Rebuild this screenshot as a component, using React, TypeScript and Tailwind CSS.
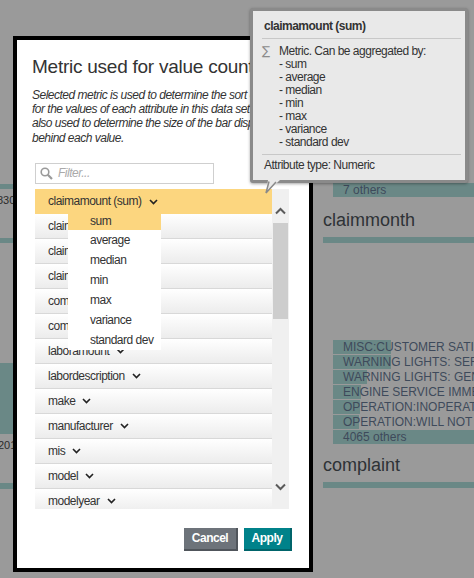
import React from "react";

const rows = [
  "claimdate",
  "claimmonth",
  "claimnumber",
  "complaint",
  "component",
  "laboramount",
  "labordescription",
  "make",
  "manufacturer",
  "mis",
  "model",
  "modelyear",
];

const metrics = ["sum", "average", "median", "min", "max", "variance", "standard dev"];

const complaints = [
  { label: "MISC:CUSTOMER SATISFACTION", w: 58 },
  { label: "WARNING LIGHTS: SERVICE", w: 58 },
  { label: "WARNING LIGHTS: GENERAL", w: 34 },
  { label: "ENGINE SERVICE IMMEDIATELY", w: 28 },
  { label: "OPERATION:INOPERATIVE", w: 27 },
  { label: "OPERATION:WILL NOT START", w: 26 },
];

function Chevron() {
  return (
    <svg width="9" height="6" viewBox="0 0 9 6" className="mt-[1px] shrink-0">
      <path d="M1 1l3.5 3.6L8 1" fill="none" stroke="#222" strokeWidth="1.6" />
    </svg>
  );
}

function ScrollArrow({ up }: { up?: boolean }) {
  return (
    <svg width="11" height="8" viewBox="0 0 11 8" className="mx-auto">
      <path
        d={up ? "M1 6.5l4.5-4.5 4.5 4.5" : "M1 1.5l4.5 4.5 4.5-4.5"}
        fill="none"
        stroke="#5a5a5a"
        strokeWidth="2"
      />
    </svg>
  );
}

function Background() {
  return (
    <div className="flex h-full">
      <div className="w-[13px] shrink-0 overflow-hidden pt-[184px] text-[11px] leading-[14px] text-[#2b2b2b]">
        <div className="h-[5px] bg-[#6a8886]" />
        <div className="mt-[4px] ml-[-3px] whitespace-nowrap">830</div>
        <div className="mt-[31px] h-[5px] bg-[#6a8886]" />
        <div className="mt-[120px] h-[71px] bg-[#6a8886]" />
        <div className="mt-[4px] ml-[-2px] whitespace-nowrap">2013</div>
        <div className="mt-[31px] h-[6px] bg-[#6a8886]" />
      </div>
      <div className="w-[300px] shrink-0" />
      <div className="flex-1 overflow-hidden pt-[183px] pl-[10px] text-[#3e4a5b]">
        <div className="ml-[10px] h-[14px] bg-[#6a8886] pl-[10px] text-[12px] leading-[14px] whitespace-nowrap">
          7 others
        </div>
        <div className="mt-[13px] text-[18px] leading-[21px] text-[#2e3236]">claimmonth</div>
        <div className="mt-[6px] h-[6px] bg-[#6a8886]" />
        <div className="mt-[97px] ml-[10px] flex flex-col gap-[1px] text-[12px] leading-[14px]">
          {complaints.map((c) => (
            <div key={c.label} className="relative h-[14px] whitespace-nowrap">
              <div className="absolute inset-y-0 left-0 bg-[#6a8886]" style={{ width: c.w }} />
              <span className="relative pl-[10px]">{c.label}</span>
            </div>
          ))}
          <div className="h-[14px] bg-[#6a8886] pl-[10px] whitespace-nowrap">4065 others</div>
        </div>
        <div className="mt-[11px] text-[18px] leading-[21px] text-[#2e3236]">complaint</div>
        <div className="mt-[6px] h-[6px] bg-[#6a8886]" />
      </div>
    </div>
  );
}

function MetricDialog() {
  return (
    <div className="absolute left-[13px] top-[36px] flex h-[536px] w-[300px] flex-col border-4 border-black bg-white text-[#333]">
      <div className="pl-[15px] pt-[16px] text-[19px] leading-[22px] tracking-[-0.25px] whitespace-nowrap">
        Metric used for value counts
      </div>
      <p className="mt-[10px] pl-[15px] text-[12px] italic leading-[14.2px] tracking-[-0.5px] whitespace-nowrap">
        Selected metric is used to determine the sort order
        <br />
        for the values of each attribute in this data set. It is
        <br />
        also used to determine the size of the bar displayed
        <br />
        behind each value.
      </p>

      <div className="mt-[18px] ml-[18px] flex h-[21px] w-[179px] items-center gap-[5px] border border-[#cfcfcf] pl-[4px]">
        <svg width="13" height="13" viewBox="0 0 13 13">
          <circle cx="5" cy="5" r="3.8" fill="none" stroke="#9a9a9a" strokeWidth="1.6" />
          <path d="M7.8 7.8l4.2 4.2" stroke="#9a9a9a" strokeWidth="2.2" />
        </svg>
        <span className="text-[12px] italic tracking-[-0.5px] text-[#aaa]">Filter...</span>
      </div>

      <div className="relative mt-[5px] ml-[18px] flex h-[320px] w-[254px]">
        <div className="flex-1 overflow-hidden">
          <div className="flex h-[25px] items-center gap-[7px] bg-[#fcd67f] pl-[13px] text-[12px] tracking-[-0.5px]">
            <span>claimamount (sum)</span>
            <Chevron />
          </div>
          {rows.map((r) => (
            <div
              key={r}
              className="flex h-[25px] items-center gap-[7px] border-b border-[#d8d8d8] bg-linear-to-b from-white to-[#ececec] pl-[13px] text-[12px] tracking-[-0.5px]"
            >
              <span>{r}</span>
              <Chevron />
            </div>
          ))}
        </div>
        <div className="flex w-[17px] flex-col bg-[#f0f0f0] pt-[18px] pb-[18px]">
          <ScrollArrow up />
          <div className="mx-auto mt-[8px] h-[96px] w-[15px] bg-[#cdcdcd]" />
          <div className="flex-1" />
          <ScrollArrow />
        </div>

        <div className="absolute left-[33px] top-[24px] z-10 w-[93px] bg-white text-[12px] tracking-[-0.5px]">
          {metrics.map((m, i) => (
            <div
              key={m}
              className={
                i === 0
                  ? "flex h-[17px] items-center bg-[#fcd67f] pl-[22px]"
                  : "flex h-[20px] items-center pl-[22px]"
              }
            >
              {m}
            </div>
          ))}
        </div>
      </div>

      <div className="mt-[19px] flex justify-end gap-[6px] pr-[17px]">
        <button className="h-[23px] w-[54px] border-r-2 border-b-2 border-[#50555b] bg-[#6d737a] text-[12px] font-bold tracking-[-0.5px] text-white">
          Cancel
        </button>
        <button className="h-[23px] w-[48px] border-r-2 border-b-2 border-[#00646a] bg-[#00828a] text-[12px] font-bold tracking-[-0.5px] text-white">
          Apply
        </button>
      </div>
    </div>
  );
}

function MetricTooltip() {
  return (
    <div className="absolute left-[250px] top-[8px] h-[175px] w-[218px] rounded-[3px] border-[3px] border-[#8a8a8a] bg-[#e9e9e9] text-[12px] tracking-[-0.5px] text-[#333] shadow-[0_1px_3px_rgba(0,0,0,0.35)]">
      <div className="pl-[11px] pt-[8px] font-bold leading-[15px]">claimamount (sum)</div>
      <div className="mt-[4px] mr-[4px] ml-[9px] border-t border-[#c8c8c8]" />
      <div className="mt-[6px] flex leading-[13px]">
        <span className="w-[26px] pl-[9px] font-['DejaVu_Sans',sans-serif] text-[12px] text-[#8c8c8c]">
          ∑
        </span>
        <div>
          <div>Metric. Can be aggregated by:</div>
          {metrics.map((m) => (
            <div key={m}>- {m}</div>
          ))}
        </div>
      </div>
      <div className="mt-[5px] mr-[4px] ml-[9px] border-t border-[#c8c8c8]" />
      <div className="mt-[4px] pl-[11px] leading-[13px]">Attribute type: Numeric</div>
      <svg
        width="18"
        height="16"
        viewBox="0 0 18 16"
        className="absolute left-[10px] top-[169px]"
      >
        <path d="M5 0h12L3 13z" fill="#e9e9e9" />
        <path d="M6 1.5L3 13l10-11" fill="none" stroke="#8a8a8a" strokeWidth="1.5" />
      </svg>
    </div>
  );
}

export default function App() {
  return (
    <div className="relative h-[578px] w-[474px] overflow-hidden bg-[#9a9a9a] font-['Liberation_Sans',Arial,sans-serif]">
      <Background />
      <MetricDialog />
      <MetricTooltip />
    </div>
  );
}
